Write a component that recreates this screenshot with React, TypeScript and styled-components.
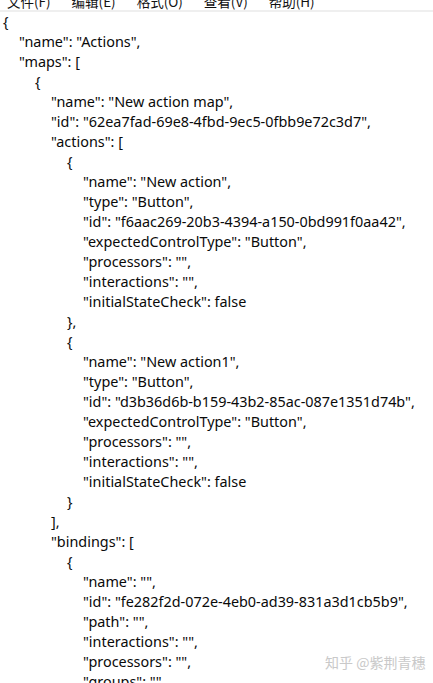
import { createGlobalStyle, styled } from "styled-components";

const GlobalStyle = createGlobalStyle`
  html, body {
    margin: 0;
    padding: 0;
    background: #fff;
  }
  #root {
    width: 433px;
    height: 683px;
    overflow: hidden;
  }
`;

interface CodeLine {
  level: number;
  text: string;
}

const menus = ["文件(F)", "编辑(E)", "格式(O)", "查看(V)", "帮助(H)"];

const lines: CodeLine[] = [
  { level: 0, text: "{" },
  { level: 1, text: '"name": "Actions",' },
  { level: 1, text: '"maps": [' },
  { level: 2, text: "{" },
  { level: 3, text: '"name": "New action map",' },
  { level: 3, text: '"id": "62ea7fad-69e8-4fbd-9ec5-0fbb9e72c3d7",' },
  { level: 3, text: '"actions": [' },
  { level: 4, text: "{" },
  { level: 5, text: '"name": "New action",' },
  { level: 5, text: '"type": "Button",' },
  { level: 5, text: '"id": "f6aac269-20b3-4394-a150-0bd991f0aa42",' },
  { level: 5, text: '"expectedControlType": "Button",' },
  { level: 5, text: '"processors": "",' },
  { level: 5, text: '"interactions": "",' },
  { level: 5, text: '"initialStateCheck": false' },
  { level: 4, text: "}," },
  { level: 4, text: "{" },
  { level: 5, text: '"name": "New action1",' },
  { level: 5, text: '"type": "Button",' },
  { level: 5, text: '"id": "d3b36d6b-b159-43b2-85ac-087e1351d74b",' },
  { level: 5, text: '"expectedControlType": "Button",' },
  { level: 5, text: '"processors": "",' },
  { level: 5, text: '"interactions": "",' },
  { level: 5, text: '"initialStateCheck": false' },
  { level: 4, text: "}" },
  { level: 3, text: "]," },
  { level: 3, text: '"bindings": [' },
  { level: 4, text: "{" },
  { level: 5, text: '"name": "",' },
  { level: 5, text: '"id": "fe282f2d-072e-4eb0-ad39-831a3d1cb5b9",' },
  { level: 5, text: '"path": "",' },
  { level: 5, text: '"interactions": "",' },
  { level: 5, text: '"processors": "",' },
  { level: 5, text: '"groups": "",' },
];

export default function App() {
  return (
    <>
      <GlobalStyle />
      <Window>
        <MenuBar>
          {menus.map((m) => (
            <MenuItem key={m}>{m}</MenuItem>
          ))}
        </MenuBar>
        <Editor>
          {lines.map((l, i) => (
            <Line key={i} $level={l.level}>
              {l.text}
            </Line>
          ))}
        </Editor>
        <Watermark>知乎 @紫荆青穗</Watermark>
      </Window>
    </>
  );
}

const Window = styled.div`
  position: relative;
  width: 433px;
  height: 683px;
  overflow: hidden;
  background: #fff;
  display: flex;
  flex-direction: column;
`;

const MenuBar = styled.div`
  height: 10px;
  flex-shrink: 0;
  display: flex;
  gap: 21px;
  padding-left: 7px;
  overflow: hidden;
  border-bottom: 2px solid #efefef;
`;

const MenuItem = styled.div`
  margin-top: -6px;
  font-family: "Noto Sans CJK SC", sans-serif;
  font-size: 13.5px;
  line-height: 14px;
  color: #111;
  white-space: nowrap;
`;

const Editor = styled.div`
  display: flex;
  flex-direction: column;
  padding-left: 3px;
`;

const Line = styled.div<{ $level: number }>`
  height: 20px;
  padding-left: ${(p) => p.$level * 16}px;
  font-family: "Noto Sans", sans-serif;
  font-size: 14.4px;
  line-height: 20px;
  color: #0a0a0a;
  white-space: pre;
`;

const Watermark = styled.div`
  position: absolute;
  left: 325px;
  top: 652px;
  font-family: "Noto Sans CJK SC", sans-serif;
  font-size: 14px;
  line-height: 20px;
  color: #c9c9c9;
  white-space: nowrap;
`;
